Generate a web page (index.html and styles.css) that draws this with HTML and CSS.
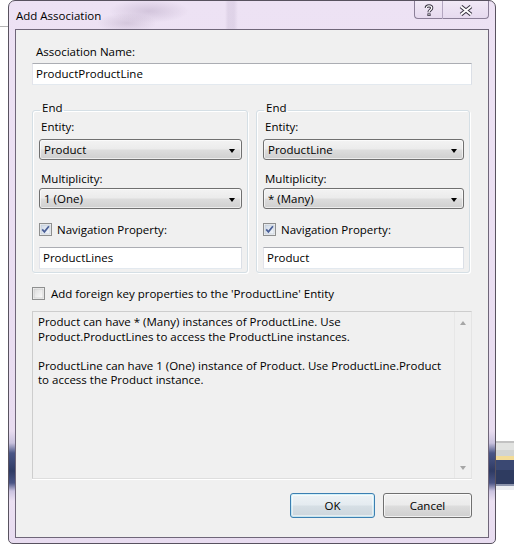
FILE: index.html
```html
<!DOCTYPE html>
<html>
<head>
<meta charset="utf-8">
<title>Add Association</title>
<link rel="stylesheet" href="styles.css">
</head>
<body>
<div class="window">
  <div class="titlebar">
    <span class="title">Add Association</span>
    <div class="caption-btns">
      <div class="cap help">
        <svg width="10" height="12" viewBox="0 0 10 12">
          <path d="M2.3 4 C2.3 1.2 7.7 1.2 7.7 4 C7.7 6 5 6 5 8.2" fill="none" stroke="#3b3645" stroke-width="3.2"/>
          <rect x="3.4" y="9.4" width="3.2" height="2.6" fill="#3b3645"/>
          <path d="M2.3 4 C2.3 1.2 7.7 1.2 7.7 4 C7.7 6 5 6 5 8.2" fill="none" stroke="#fff" stroke-width="1.3"/>
          <rect x="4.35" y="10.2" width="1.3" height="1" fill="#fff"/>
        </svg>
      </div>
      <div class="cap close">
        <svg width="16" height="11" viewBox="0 0 16 11">
          <path d="M3 1.5 L13 9.5 M13 1.5 L3 9.5" stroke="#3b3645" stroke-width="4"/>
          <path d="M3 1.5 L13 9.5 M13 1.5 L3 9.5" stroke="#fff" stroke-width="2"/>
        </svg>
      </div>
    </div>
  </div>
  <div class="client">
    <div class="lbl name-lbl">Association Name:</div>
    <div class="textbox name-box">ProductProductLine</div>
    <div class="ends">
      <fieldset class="group left">
        <legend>End</legend>
        <div class="lbl first">Entity:</div>
        <div class="combo"><span>Product</span><span class="arrow"></span></div>
        <div class="lbl second">Multiplicity:</div>
        <div class="combo combo2"><span>1 (One)</span><span class="arrow"></span></div>
        <div class="check-row nav">
          <svg class="cb" width="13" height="13" viewBox="0 0 13 13">
            <defs>
              <linearGradient id="cbg1" x1="0" y1="0" x2="1" y2="1">
                <stop offset="0" stop-color="#cfd9e6"/>
                <stop offset="1" stop-color="#f4f7fb"/>
              </linearGradient>
            </defs>
            <rect x="0.5" y="0.5" width="12" height="12" fill="#f4f4f4" stroke="#8e8f8f"/>
            <rect x="2" y="2" width="9" height="9" fill="url(#cbg1)" stroke="#b8c3d1" stroke-width="0.6"/>
            <path d="M3.2 6.4 L5.4 8.9 L9.9 3.2" fill="none" stroke="#4a5f97" stroke-width="1.7"/>
          </svg>
          <span>Navigation Property:</span>
        </div>
        <div class="textbox prop-box">ProductLines</div>
      </fieldset>
      <fieldset class="group right">
        <legend>End</legend>
        <div class="lbl first">Entity:</div>
        <div class="combo"><span>ProductLine</span><span class="arrow"></span></div>
        <div class="lbl second">Multiplicity:</div>
        <div class="combo combo2"><span>* (Many)</span><span class="arrow"></span></div>
        <div class="check-row nav">
          <svg class="cb" width="13" height="13" viewBox="0 0 13 13">
            <defs>
              <linearGradient id="cbg2" x1="0" y1="0" x2="1" y2="1">
                <stop offset="0" stop-color="#cfd9e6"/>
                <stop offset="1" stop-color="#f4f7fb"/>
              </linearGradient>
            </defs>
            <rect x="0.5" y="0.5" width="12" height="12" fill="#f4f4f4" stroke="#8e8f8f"/>
            <rect x="2" y="2" width="9" height="9" fill="url(#cbg2)" stroke="#b8c3d1" stroke-width="0.6"/>
            <path d="M3.2 6.4 L5.4 8.9 L9.9 3.2" fill="none" stroke="#4a5f97" stroke-width="1.7"/>
          </svg>
          <span>Navigation Property:</span>
        </div>
        <div class="textbox prop-box">Product</div>
      </fieldset>
    </div>
    <div class="check-row fk">
      <svg class="cb" width="13" height="13" viewBox="0 0 13 13">
        <defs>
          <linearGradient id="cbg3" x1="0" y1="0" x2="1" y2="1">
            <stop offset="0" stop-color="#dcdcdc"/>
            <stop offset="1" stop-color="#fbfbfb"/>
          </linearGradient>
        </defs>
        <rect x="0.5" y="0.5" width="12" height="12" fill="#f4f4f4" stroke="#8e8f8f"/>
        <rect x="2" y="2" width="9" height="9" fill="url(#cbg3)" stroke="#c4c4c4" stroke-width="0.6"/>
      </svg>
      <span>Add foreign key properties to the 'ProductLine' Entity</span>
    </div>
    <div class="memo">
      <div class="memo-text">
        <p>Product can have * (Many) instances of ProductLine. Use Product.ProductLines to access the ProductLine instances.</p>
        <p>ProductLine can have 1 (One) instance of Product. Use ProductLine.Product to access the Product instance.</p>
      </div>
      <div class="scroll">
        <span class="sarrow up"></span>
        <span class="sarrow down"></span>
      </div>
    </div>
    <div class="buttons">
      <div class="btn default">OK</div>
      <div class="btn cancel">Cancel</div>
    </div>
  </div>
</div>
</body>
</html>
```

FILE: styles.css
```css
html, body {
  margin: 0;
  height: 545px;
  overflow: hidden;
}

body {
  padding-left: 8px;
  font-family: "Open Sans", "Noto Sans", sans-serif;
  font-size: 11.5px;
  color: #000;
  background:
    linear-gradient(to bottom, #fff 0 26px, #b4b4b4 26px 27px, #fff 27px) no-repeat 0 0 / 8px 100%,
    linear-gradient(to bottom,
      #fff 0 441px,
      #c2c2c2 441px 443px,
      #e2e3e1 443px 450px,
      #d3d5d2 450px 456px,
      #f3dc98 456px 460px,
      #3a4872 460px 470px,
      #2e3b60 470px 484px,
      #8d95ad 484px 486px,
      #eceef2 486px 490px,
      #fff 490px);
}

.window {
  width: 488px;
  height: 544px;
  box-sizing: border-box;
  border: 1px solid #58525f;
  border-radius: 7px 7px 5px 5px;
  padding: 0 6px 5px;
  display: flex;
  flex-direction: column;
  background:
    radial-gradient(ellipse 40px 12px at 140px 10px, rgba(150, 130, 165, 0.3), rgba(150, 130, 165, 0)),
    radial-gradient(ellipse 30px 10px at 118px 22px, rgba(140, 120, 150, 0.25), rgba(140, 120, 150, 0)),
    linear-gradient(to right, rgba(0,0,0,0) 0 216px, rgba(175, 160, 190, 0.22) 219px 225px, rgba(0,0,0,0) 229px) no-repeat 0 0 / 100% 28px,
    linear-gradient(to bottom,
      #ede2f4 0,
      #e8dcf0 430px,
      #c9c2de 442px,
      #4a5686 452px,
      #2f3b64 470px,
      #4b5585 482px,
      #cbc3e0 490px,
      #ebe0f2 500px,
      #e8dcf0 100%);
}

.titlebar {
  height: 28px;
  display: flex;
  align-items: flex-start;
  flex: none;
}

.title {
  margin: 7px 0 0 1px;
  line-height: 15px;
}

.caption-btns {
  margin-left: auto;
  display: flex;
  height: 18px;
}

.cap {
  box-sizing: border-box;
  height: 18px;
  display: flex;
  align-items: center;
  justify-content: center;
  border: 1px solid #8b7f98;
  border-top: none;
  background: linear-gradient(to bottom, #f1e9f6, #e6daef);
}

.cap.help {
  width: 28px;
  border-radius: 0 0 0 4px;
  border-right: none;
  padding-top: 1px;
}

.cap.close {
  width: 47px;
  border-radius: 0 0 4px 0;
  border-left: 1px solid #b3a6c0;
  padding-top: 1px;
}

.client {
  flex: 1;
  border: 1px solid #6f6679;
  background: #f0f0f0;
  padding: 0 16px;
  display: flex;
  flex-direction: column;
}

.lbl {
  line-height: 15px;
}

.name-lbl {
  margin: 14px 0 0 4px;
}

.textbox {
  box-sizing: border-box;
  background: #fff;
  border: 1px solid;
  border-color: #abadb3 #dbdfe6 #e3e9ef #e2e3ea;
  line-height: 20px;
  padding-left: 3px;
}

.name-box {
  margin-top: 4px;
  height: 22px;
}

.ends {
  margin-top: 16px;
  display: grid;
  grid-template-columns: 216px 214px;
  column-gap: 8px;
}

.group {
  margin: 0;
  min-width: 0;
  padding: 0 5px 3px 6px;
  border: 1px solid #d5dfe5;
  border-radius: 3px;
  box-shadow: inset 1px 1px 0 #fff, 1px 1px 0 #fff;
  display: flex;
  flex-direction: column;
}

.group legend {
  padding: 0 2px 4px;
  margin-left: 1px;
  line-height: 14px;
}

.group .lbl {
  padding-left: 2px;
}

.group .first {
  margin-top: 0;
}

.combo {
  box-sizing: border-box;
  height: 21px;
  margin-top: 5px;
  border: 1px solid #707070;
  border-radius: 3px;
  background: linear-gradient(to bottom, #f3f3f3 0%, #ebebeb 48%, #dddddd 52%, #cfcfcf 100%);
  box-shadow: inset 0 0 0 1px rgba(255, 255, 255, 0.6);
  display: flex;
  align-items: center;
  padding: 0 6px 0 4px;
}

.combo span:first-child {
  flex: 1;
  line-height: 15px;
}

.arrow {
  width: 0;
  height: 0;
  border-left: 3.5px solid transparent;
  border-right: 3.5px solid transparent;
  border-top: 4px solid #000;
  margin-top: 2px;
}

.group .second {
  margin-top: 11px;
}

.combo2 {
  margin-top: 2px;
}

.check-row {
  display: flex;
  align-items: center;
  line-height: 15px;
}

.cb {
  flex: none;
  display: block;
}

.nav {
  margin-top: 13px;
}

.nav .cb {
  margin-right: 5px;
}

.prop-box {
  margin-top: 10px;
  height: 22px;
}

.fk {
  margin-top: 13px;
}

.fk .cb {
  margin-right: 6px;
}

.memo {
  box-sizing: border-box;
  margin-top: 10px;
  height: 168px;
  border: 1px solid;
  border-color: #cdcdcd #e4e4e4 #dedede #cdcdcd;
  box-shadow: 0 1px 0 #fff;
  display: flex;
}

.memo-text {
  flex: 1;
  padding: 3px 9px 0 5px;
  line-height: 14.5px;
}

.memo-text p {
  margin: 0 0 14.5px;
}

.scroll {
  width: 17px;
  flex: none;
  border-left: 1px solid #e7e7e7;
  display: flex;
  flex-direction: column;
  align-items: center;
  justify-content: space-between;
  padding: 9px 0 8px;
  box-sizing: border-box;
}

.sarrow {
  width: 0;
  height: 0;
  border-left: 3.5px solid transparent;
  border-right: 3.5px solid transparent;
}

.sarrow.up {
  border-bottom: 4px solid #a6a6a6;
}

.sarrow.down {
  border-top: 4px solid #a6a6a6;
}

.buttons {
  margin-top: 14px;
  display: flex;
  justify-content: flex-end;
  gap: 8px;
}

.btn {
  box-sizing: border-box;
  height: 25px;
  border: 1px solid #707070;
  border-radius: 3px;
  background: linear-gradient(to bottom, #f2f2f2 0%, #ebebeb 48%, #dddddd 52%, #cfcfcf 100%);
  box-shadow: inset 0 0 0 1px rgba(255, 255, 255, 0.7);
  display: flex;
  align-items: center;
  justify-content: center;
  line-height: 15px;
}

.btn.default {
  width: 85px;
  border-color: #3c7fb1;
  box-shadow: inset 0 0 0 1px #48d4fc33, inset 0 0 0 2px rgba(255, 255, 255, 0.5);
  background: linear-gradient(to bottom, #eef3f6 0%, #e4ebf0 48%, #d6dfe5 52%, #ccd5dc 100%);
}

.btn.cancel {
  width: 89px;
}
```
